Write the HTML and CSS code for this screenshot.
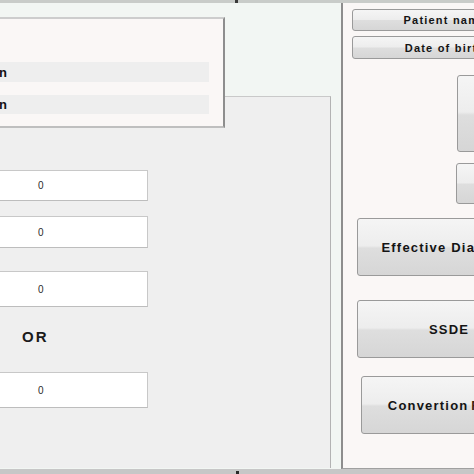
FILE: index.html
```html
<!DOCTYPE html>
<html>
<head>
<meta charset="utf-8">
<link rel="stylesheet" href="styles.css">
</head>
<body>
<div class="app">
  <div class="topline"><span class="tick"></span></div>
  <div class="main">
    <div class="left">
      <div class="info-panel">
        <div class="info-row row1"><div class="label"><span>Institution</span></div></div>
        <div class="info-row row2"><div class="label"><span>Station</span></div></div>
      </div>
      <div class="input-panel">
        <div class="field f1">0</div>
        <div class="field f2">0</div>
        <div class="field f3">0</div>
        <div class="or">OR</div>
        <div class="field f4">0</div>
      </div>
    </div>
    <div class="right">
      <div class="btn b-patient small">Patient name</div>
      <div class="btn b-dob small">Date of birth</div>
      <div class="btn b-tall"></div>
      <div class="btn b-four"></div>
      <div class="btn b-eff big">Effective Diameter</div>
      <div class="btn b-ssde big">SSDE</div>
      <div class="btn b-conv big">Convertion <span class="fword">Factor</span></div>
    </div>
  </div>
  <div class="bottombar"><span class="tick"></span></div>
</div>
</body>
</html>
```

FILE: styles.css
```css
html, body {
  margin: 0;
  padding: 0;
  overflow: hidden;
}
body {
  width: 474px;
  height: 474px;
  font-family: "Liberation Sans", Arial, sans-serif;
  background: #f2f6f3;
}
.app {
  width: 474px;
  height: 474px;
  display: flex;
  flex-direction: column;
  overflow: hidden;
}
.topline {
  height: 3px;
  background: #c9ccc9;
  display: flex;
  flex-shrink: 0;
}
.topline .tick {
  margin-left: 235px;
  width: 3px;
  background: #3a3a3a;
}
.main {
  height: 466px;
  display: flex;
  flex-shrink: 0;
}
.left {
  width: 341px;
  background: #f2f6f3;
  display: grid;
  grid-template-columns: 225px 106px 10px;
  grid-template-rows: 14px 79px 32px 1fr;
}
.info-panel {
  grid-column: 1;
  grid-row: 2 / 4;
  z-index: 2;
  background: #faf7f6;
  border-top: 2px solid #cdcdcd;
  border-right: 2px solid #8e8e8e;
  border-bottom: 2px solid #bfbfbf;
  display: flex;
  flex-direction: column;
}
.info-row {
  width: 209px;
  background: #eeeeee;
  display: flex;
  align-items: center;
}
.row1 { margin-top: 43px; height: 20px; }
.row2 { margin-top: 13px; height: 19px; }
.label {
  width: 7px;
  display: flex;
  justify-content: flex-end;
  white-space: nowrap;
  font-size: 13px;
  font-weight: bold;
  color: #111;
}
.input-panel {
  grid-column: 1 / 3;
  grid-row: 3 / 5;
  background: #efefef;
  border-top: 1px solid #c9c9c9;
  border-right: 1px solid #b3b3b3;
  margin-bottom: 1px;
  display: flex;
  flex-direction: column;
}
.field {
  margin-left: -1px;
  width: 149px;
  box-sizing: border-box;
  background: #ffffff;
  border: 1px solid #c8c8c8;
  border-bottom-color: #bdbdbd;
  display: flex;
  align-items: center;
  padding-left: 38px;
  font-size: 10px;
  color: #2a2a2a;
}
.f1 { margin-top: 73px; height: 31px; }
.f2 { margin-top: 15px; height: 32px; }
.f3 { margin-top: 23px; height: 36px; }
.or {
  margin-top: 22px;
  margin-left: 22px;
  height: 15px;
  line-height: 15px;
  font-size: 15px;
  font-weight: bold;
  letter-spacing: 2px;
  color: #1a1a1a;
}
.f4 { margin-top: 28px; height: 36px; }
.right {
  width: 131px;
  background: #faf7f6;
  border-left: 2px solid #8d8d8d;
  border-bottom: 1px solid #a0a0a0;
  height: 465px;
  display: flex;
  flex-direction: column;
  overflow: hidden;
}
.btn {
  flex-shrink: 0;
  box-sizing: border-box;
  border: 1px solid #9a9a9a;
  border-radius: 3px;
  background: linear-gradient(to bottom, #f5f5f5 0%, #ededed 48%, #dedede 52%, #d6d6d6 100%);
  display: flex;
  align-items: center;
  justify-content: center;
  white-space: pre;
  font-weight: bold;
  color: #141414;
}
.small {
  font-size: 11px;
  letter-spacing: 1.2px;
}
.big {
  font-size: 13px;
  letter-spacing: 1.2px;
}
.fword {
  margin-left: -2px;
  color: #3a2412;
}
.b-patient { margin: 6px 0 0 9px; width: 186px; height: 22px; }
.b-dob { margin: 5px 0 0 9px; width: 186px; height: 23px; }
.b-tall { margin: 16px 0 0 114px; width: 60px; height: 77px; }
.b-four { margin: 11px 0 0 113px; width: 60px; height: 41px; }
.b-eff { margin: 14px 0 0 14px; width: 184px; height: 58px; }
.b-ssde { margin: 24px 0 0 14px; width: 184px; height: 58px; }
.b-conv { margin: 18px 0 0 18px; width: 184px; height: 58px; }
.bottombar {
  height: 5px;
  background: #c7c7c7;
  display: flex;
  flex-shrink: 0;
}
.bottombar .tick {
  margin-left: 236px;
  margin-top: 2px;
  width: 3px;
  background: #2a2a2a;
}
```
